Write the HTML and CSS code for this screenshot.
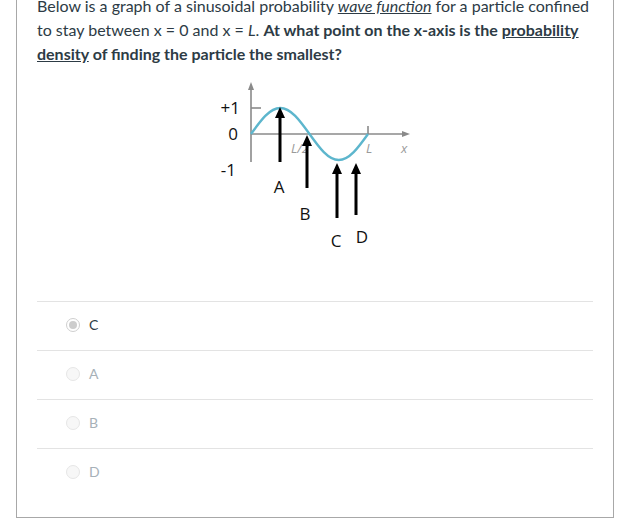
FILE: index.html
```html
<!DOCTYPE html>
<html>
<head>
<meta charset="utf-8">
<link rel="stylesheet" href="styles.css">
</head>
<body>
<div class="card">
  <p class="question">Below is a graph of a sinusoidal probability <span class="term-italic">wave function</span> for a particle confined to stay between x = 0 and x = <i>L</i>. <b>At what point on the x-axis is the <span class="term">probability density</span> of finding the particle the smallest?</b></p>
  <div class="figure">
    <svg class="graph" width="210" height="172" viewBox="0 0 210 172" xmlns="http://www.w3.org/2000/svg">
      <g transform="translate(-210,-78)">
        <g stroke="#8a8a8a" stroke-width="1.6" fill="none">
          <line x1="251" y1="88" x2="251" y2="162"/>
          <line x1="251" y1="134" x2="404" y2="134"/>
          <line x1="251" y1="108" x2="261" y2="108"/>
          <line x1="368" y1="126" x2="368" y2="134"/>
        </g>
        <polygon points="251,82 248,90 254,90" fill="#8a8a8a"/>
        <polygon points="410,134 402,131 402,137" fill="#8a8a8a"/>
        <path d="M251,134 C260.8,120.3 269.6,108 280.25,108 C290.9,108 299.7,120.3 309.5,134 C319.3,147.7 328.1,160 338.75,160 C349.4,160 358.2,147.7 368,134" stroke="#5db6cd" stroke-width="2.4" fill="none"/>
        <g class="ax-label" fill="#9a9a9a" font-size="13" font-style="italic">
          <text x="291" y="153">L/2</text>
          <text x="366" y="153">L</text>
          <text x="401" y="153">x</text>
        </g>
        <g class="num" fill="#111" font-size="17">
          <text x="240" y="114" text-anchor="end">+1</text>
          <text x="238" y="140" text-anchor="end">0</text>
          <text x="236" y="176" text-anchor="end">-1</text>
        </g>
        <g fill="#000">
          <rect x="278.5" y="116" width="3" height="46"/>
          <polygon points="280,107 275,118 285,118"/>
          <rect x="305.5" y="144" width="3" height="44"/>
          <polygon points="307,135 302,146 312,146"/>
          <rect x="335.5" y="172" width="3" height="46"/>
          <polygon points="337,163 332,174 342,174"/>
          <rect x="354.5" y="172" width="3" height="43"/>
          <polygon points="356,163 351,174 361,174"/>
        </g>
        <g class="letters" fill="#111" font-size="17" text-anchor="middle">
          <text x="279" y="193">A</text>
          <text x="305" y="220">B</text>
          <text x="336" y="247">C</text>
          <text x="362" y="243">D</text>
        </g>
      </g>
    </svg>
  </div>
  <div class="options">
    <div class="option selected"><span class="radio"><span class="dot"></span></span><span class="label">C</span></div>
    <div class="option"><span class="radio"></span><span class="label">A</span></div>
    <div class="option"><span class="radio"></span><span class="label">B</span></div>
    <div class="option"><span class="radio"></span><span class="label">D</span></div>
  </div>
</div>
</body>
</html>
```
FILE: styles.css
```css
html, body {
  margin: 0;
  padding: 0;
  background: #fff;
}
.card {
  box-sizing: border-box;
  width: 598px;
  margin: -6px 0 0 16px;
  padding: 0 20px 20px 20px;
  border: 1px solid #a8a8a8;
  border-top: none;
  font-family: Lato, "Open Sans", sans-serif;
  color: #2d3b45;
}
.question {
  margin: 0;
  font-size: 16px;
  line-height: 24px;
}
.question b {
  font-weight: 700;
}
.term-italic {
  font-style: italic;
  text-decoration: underline;
}
.term {
  text-decoration: underline;
}
.figure {
  display: flex;
  justify-content: center;
  margin-top: 12px;
}
.graph {
  display: block;
}
.graph text {
  font-family: "Open Sans", "DejaVu Sans", sans-serif;
}
.options {
  margin-top: 51px;
}
.option {
  display: flex;
  align-items: center;
  gap: 9px;
  border-top: 1px solid #e3e3e3;
  padding: 16px 0 18px 29px;
  font-size: 14px;
  line-height: 14px;
  color: #a7b1b8;
}
.option.selected {
  color: #2d3b45;
}
.radio {
  box-sizing: border-box;
  width: 14px;
  height: 14px;
  border-radius: 50%;
  border: 1px solid #e6e6e6;
  background: #f7f7f7;
  display: flex;
  align-items: center;
  justify-content: center;
}
.selected .radio {
  border: 1px solid #cfcfcf;
  background: #fff;
}
.dot {
  width: 8px;
  height: 8px;
  border-radius: 50%;
  background: #cdcdcd;
}
```
